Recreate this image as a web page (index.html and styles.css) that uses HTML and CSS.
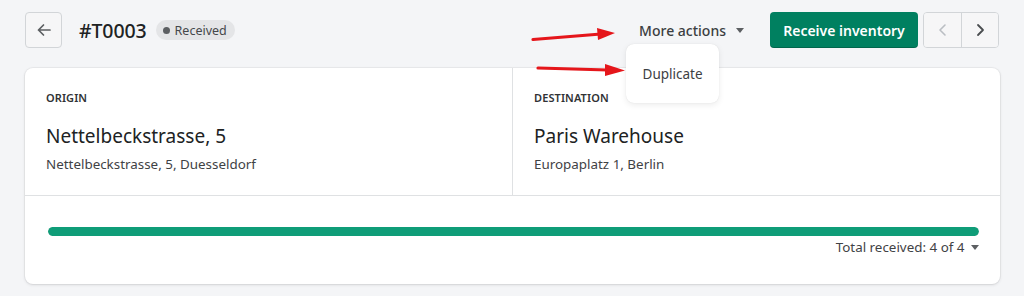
FILE: index.html
```html
<!DOCTYPE html>
<html>
<head>
<meta charset="utf-8">
<link rel="stylesheet" href="styles.css">
</head>
<body>
<div class="page">
  <header class="topbar">
    <div class="title-group">
      <button class="back-btn" aria-label="Back">
        <svg width="16" height="16" viewBox="0 0 16 16"><path d="M14 8H2.5M7.5 3 2.5 8l5 5" fill="none" stroke="#5c5f62" stroke-width="1.7" stroke-linecap="round" stroke-linejoin="round"/></svg>
      </button>
      <h1 class="title">#T0003</h1>
      <span class="badge"><span class="dot"></span>Received</span>
    </div>
    <div class="actions">
      <div class="more-wrap">
        <button class="more-btn">More actions <span class="caret"></span></button>
        <div class="popover"><span>Duplicate</span></div>
      </div>
      <button class="primary-btn">Receive inventory</button>
      <div class="pager">
        <button class="pg disabled"><svg width="12" height="14" viewBox="0 0 12 14"><path d="M8 2 3 7l5 5" fill="none" stroke="#babec3" stroke-width="1.6" stroke-linecap="round" stroke-linejoin="round"/></svg></button>
        <button class="pg"><svg width="12" height="14" viewBox="0 0 12 14"><path d="M4 2l5 5-5 5" fill="none" stroke="#4a4d50" stroke-width="1.8" stroke-linecap="round" stroke-linejoin="round"/></svg></button>
      </div>
    </div>
  </header>

  <section class="card">
    <div class="places">
      <div class="place">
        <div class="label">ORIGIN</div>
        <div class="name">Nettelbeckstrasse, 5</div>
        <div class="addr">Nettelbeckstrasse, 5, Duesseldorf</div>
      </div>
      <div class="place right">
        <div class="label">DESTINATION</div>
        <div class="name">Paris Warehouse</div>
        <div class="addr">Europaplatz 1, Berlin</div>
      </div>
    </div>
    <div class="progress-sec">
      <div class="bar"><div class="fill" style="width:100%"></div></div>
      <div class="total">Total received: 4 of 4 <span class="caret small"></span></div>
    </div>
  </section>

  <svg class="arrow a1" width="100" height="20" viewBox="0 0 100 20"><path d="M2 12.5 70 7" stroke="#e5161b" stroke-width="3.2" stroke-linecap="round"/><path d="M66 1 84 6 67 13Z" fill="#e5161b"/></svg>
  <svg class="arrow a2" width="100" height="20" viewBox="0 0 100 20"><path d="M2 7 72 9" stroke="#e5161b" stroke-width="3.2" stroke-linecap="round"/><path d="M69 3 89 9.5 69 15Z" fill="#e5161b"/></svg>
</div>
</body>
</html>
```

FILE: styles.css
```css
* { box-sizing: border-box; }
html, body { margin: 0; padding: 0; }
body {
  background: #f4f5f7;
  font-family: "Noto Sans", "Open Sans", "Liberation Sans", sans-serif;
  color: #202223;
  width: 1024px;
  height: 296px;
  overflow: hidden;
}
.page { position: relative; padding: 12px 25px 0 25px; }
button { font-family: inherit; cursor: pointer; }

.topbar { display: flex; justify-content: space-between; align-items: center; height: 36px; }
.title-group { display: flex; align-items: center; }
.back-btn {
  width: 37px; height: 36px; padding: 0;
  display: flex; align-items: center; justify-content: center;
  background: #f6f6f7; border: 1px solid #d2d5d8; border-radius: 4px;
}
.title { margin: 0 0 0 17px; font-size: 19.5px; font-weight: 500; letter-spacing: -0.1px; color: #202223; }
.badge {
  margin-left: 9px; display: inline-flex; align-items: center;
  height: 20px; padding: 0 8px 0 7px; border-radius: 10px;
  background: #e4e5e7; font-size: 12.5px; color: #45484b;
}
.dot { width: 7px; height: 7px; border-radius: 50%; background: #5c5f62; margin-right: 5px; }

.actions { display: flex; align-items: center; }
.more-wrap { position: relative; margin-right: 26px; }
.more-btn {
  background: none; border: none; padding: 0; height: 36px;
  display: flex; align-items: center;
  font-size: 14px; font-weight: 500; color: #3b3e41;
}
.caret {
  display: inline-block; margin-left: 10px; margin-top: 1px;
  width: 0; height: 0;
  border-left: 4.5px solid transparent; border-right: 4.5px solid transparent;
  border-top: 5px solid #5c5f62;
}
.caret.small { margin-left: 3px; border-left-width: 4px; border-right-width: 4px; border-top-width: 5px; vertical-align: 2px; }
.popover {
  position: absolute; top: 32px; left: -13px; z-index: 5;
  width: 93px; height: 59px;
  background: #fff; border-radius: 8px;
  box-shadow: 0 2px 6px rgba(0,0,0,0.08), 0 0 1px rgba(0,0,0,0.12);
  display: flex; align-items: center; justify-content: center;
  font-size: 13.5px; color: #3d4043;
}
.primary-btn {
  width: 148px; height: 36px; padding: 0;
  background: #008060; color: #fff; border: none; border-radius: 4px;
  font-size: 14px; font-weight: 600;
  box-shadow: inset 0 -1px 0 rgba(0,0,0,0.2);
}
.pager { display: flex; margin-left: 5px; border: 1px solid #d2d5d8; border-radius: 4px; overflow: hidden; }
.pg {
  width: 37px; height: 34px; padding: 0; border: none; background: #f6f6f7;
  display: flex; align-items: center; justify-content: center;
}
.pg + .pg { border-left: 1px solid #d2d5d8; }

.card {
  margin-top: 20px; width: 975px; height: 216px;
  background: #fff; border-radius: 8px;
  box-shadow: 0 0 0 1px rgba(63,63,68,0.05), 0 1px 3px rgba(63,63,68,0.15);
  display: flex; flex-direction: column;
}
.places { display: flex; height: 128px; border-bottom: 1px solid #dfe1e3; }
.place { flex: 0 0 487px; padding: 22px 21px 0 21px; }
.place.right { flex: 1; border-left: 1px solid #dfe1e3; }
.label { font-size: 11px; font-weight: 600; color: #303235; letter-spacing: 0.1px; line-height: 16px; }
.name { margin-top: 17px; font-size: 19px; line-height: 26px; color: #202223; }
.addr { margin-top: 6px; font-size: 13.4px; line-height: 18px; color: #3f4245; }

.progress-sec { padding: 31px 21px 0 23px; }
.bar { height: 9px; border-radius: 5px; background: #e4e5e7; overflow: hidden; }
.fill { height: 100%; background: #0f9d78; border-radius: 5px; }
.total { margin-top: 2px; text-align: right; font-size: 13.4px; line-height: 18px; color: #3f4245; }

.arrow { position: absolute; z-index: 6; }
.a1 { left: 531px; top: 27px; }
.a2 { left: 536px; top: 61px; }
```
